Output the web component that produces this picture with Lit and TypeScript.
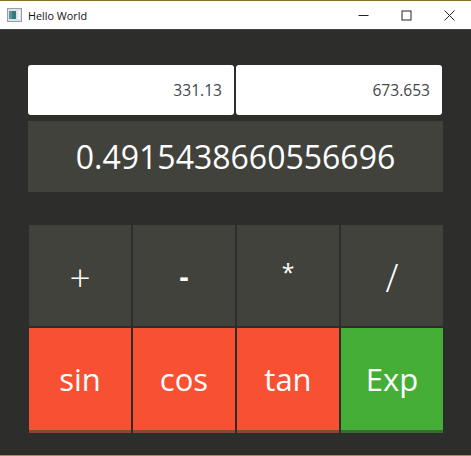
import { LitElement, html, css } from "lit";
import { customElement } from "lit/decorators.js";

@customElement("app-root")
export class AppRoot extends LitElement {
  static styles = css`
    :host { display: block; width: 471px; height: 456px; overflow: hidden; font-family: "Open Sans", "Noto Sans", sans-serif; }
    .window { height: 456px; box-sizing: border-box; display: flex; flex-direction: column; background: #2d2d2b; border-top: 1px solid #8a7030; border-bottom: 1px solid #b5912f; }
    .titlebar { height: 28px; background: #fff; display: flex; align-items: center; flex: none; border-bottom: 1px solid #444; }
    .appicon { margin-left: 7px; width: 15px; height: 14px; flex: none; }
    .title { margin-left: 6px; font: 10.8px "Open Sans", sans-serif; color: #111; flex: 1; }
    .ctl { width: 43px; height: 28px; display: flex; align-items: center; justify-content: center; flex: none; }
    .ctl svg { width: 11px; height: 11px; }
    .ctls { display: flex; }
    .content { flex: 1; padding: 35px 28px 0 28px; display: flex; flex-direction: column; }
    .inputs { display: grid; grid-template-columns: 206px 206px; gap: 2px; }
    .input { height: 50px; background: #fff; border-radius: 3px; display: flex; align-items: center; justify-content: flex-end; padding-right: 12px; font-size: 15.6px; color: #45474a; box-sizing: border-box; }
    .display { margin-top: 6px; width: 415px; height: 71px; background: #42423d; display: flex; align-items: center; justify-content: center; color: #fff; font-size: 32px; }
    .pad { margin: 33px 0 0 1px; display: grid; grid-template-columns: repeat(4, 102px); grid-template-rows: 101px 105px; gap: 2px; }
    .key { display: flex; align-items: center; justify-content: center; color: #fff; box-sizing: border-box; background: #42423d; font-size: 32px; }
    .key.op { padding-top: 2px; font-weight: 300; }
    .key.fn { font-size: 31px; border-bottom: 3px solid #8a4636; background: #f85032; }
    .key.exp { font-size: 31px; border-bottom: 3px solid #3a6b35; background: #45ae36; }
    .key.op.plus { font-size: 37px; }
    .key.op.minus { font-weight: 700; font-size: 28px; padding-top: 0; }
    .key.op.star { font-size: 23px; font-weight: 400; padding: 0 0 7px; }
    .key.op.slash { font-size: 38px; }
  `;

  render() {
    return html`<div class="window">
      <div class="titlebar">
        <svg class="appicon" viewBox="0 0 15 14">
          <rect x="0.5" y="0.5" width="14" height="13" fill="#dfe3e6" stroke="#9aa0a6"/>
          <rect x="2" y="3" width="7" height="8" fill="#2f7f78"/>
          <rect x="2" y="3" width="3" height="8" fill="#5f90a8"/>
          <rect x="11" y="3" width="2" height="8" fill="#f4f6f7"/>
        </svg>
        <span class="title">Hello World</span>
        <div class="ctls">
          <div class="ctl"><svg viewBox="0 0 11 11"><path d="M0.5 5.5H10.5" stroke="#222" stroke-width="1"/></svg></div>
          <div class="ctl"><svg viewBox="0 0 11 11"><rect x="1" y="1" width="9" height="9" fill="none" stroke="#222"/></svg></div>
          <div class="ctl"><svg viewBox="0 0 11 11"><path d="M0.5 0.5L10.5 10.5M10.5 0.5L0.5 10.5" stroke="#222" stroke-width="1"/></svg></div>
        </div>
      </div>
      <div class="content">
        <div class="inputs">
          <div class="input">331.13</div>
          <div class="input">673.653</div>
        </div>
        <div class="display">0.4915438660556696</div>
        <div class="pad">
          <div class="key op plus">+</div>
          <div class="key op minus">-</div>
          <div class="key op star">*</div>
          <div class="key op slash">/</div>
          <div class="key fn">sin</div>
          <div class="key fn">cos</div>
          <div class="key fn">tan</div>
          <div class="key exp">Exp</div>
        </div>
      </div>
    </div>`;
  }
}
